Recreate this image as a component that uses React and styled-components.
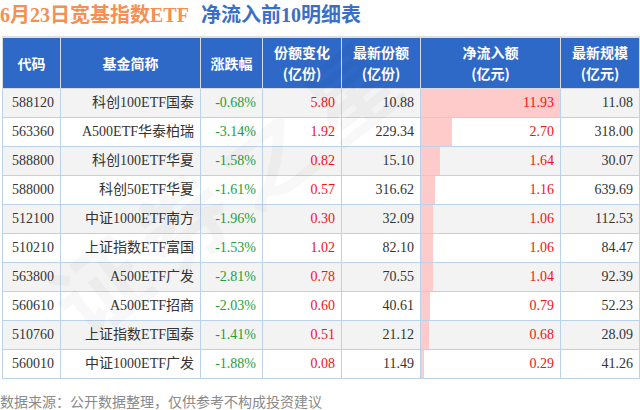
import React from 'react'
import styled, { createGlobalStyle } from 'styled-components'

const GlobalStyle = createGlobalStyle`
  html, body {
    margin: 0;
    padding: 0;
    background: #fff;
  }
`

const Page = styled.div`
  position: relative;
  width: 640px;
  height: 410px;
  overflow: hidden;
  background: #fff;
  font-family: "Liberation Serif", "Noto Sans CJK SC", serif;
`

const Title = styled.h1`
  display: flex;
  gap: 12px;
  margin: 0;
  height: 30px;
  align-items: center;
  font-size: 20px;
  font-weight: 700;
  line-height: 28px;
`

const TitlePart = styled.span`
  color: ${p => p.$color};
`

const Table = styled.table`
  position: relative;
  z-index: 1;
  margin: 6px 0 0 2px;
  width: 637px;
  table-layout: fixed;
  border-collapse: collapse;
  border-top: 2px solid #dedede;
`

const HeadCell = styled.th`
  height: 50px;
  padding: 0;
  background: #2f69c8;
  border: 1px solid #d6dbe2;
  color: #fff;
  font-family: "Noto Sans CJK SC", sans-serif;
  font-size: 14px;
  font-weight: 700;
  line-height: 21px;
  text-align: center;
`

const Row = styled.tr`
  background: ${p => (p.$odd ? '#f3f3f3' : '#fff')};
`

const Cell = styled.td`
  position: relative;
  height: 28px;
  padding: 0 6px 0 0;
  border: 1px solid #bcd2ea;
  color: ${p => p.$color || '#333'};
  font-size: 14px;
  line-height: 28px;
  text-align: right;
  white-space: nowrap;
`

const Bar = styled.div`
  position: absolute;
  left: 0;
  top: 0;
  bottom: 0;
  background: #ffcaca;
`

const CellText = styled.span`
  position: relative;
`

const Footer = styled.div`
  position: relative;
  z-index: 1;
  margin-top: 12px;
  color: #8a8a8a;
  font-family: "Noto Sans CJK SC", sans-serif;
  font-size: 14px;
  line-height: 20px;
`

const Watermark = styled.div`
  position: absolute;
  left: ${p => p.$x}px;
  top: ${p => p.$y}px;
  z-index: 2;
  pointer-events: none;
  transform: rotate(-38deg);
  transform-origin: left bottom;
  color: rgba(0, 0, 0, 0.028);
  font-family: "Noto Sans CJK SC", sans-serif;
  font-size: 92px;
  font-weight: 700;
  line-height: 100px;
  white-space: nowrap;
  letter-spacing: 14px;
`

const cols = [58, 140, 62, 79, 79, 140, 79]

const headers = [
  ['代码'],
  ['基金简称'],
  ['涨跌幅'],
  ['份额变化', '(亿份)'],
  ['最新份额', '(亿份)'],
  ['净流入额', '(亿元)'],
  ['最新规模', '(亿元)'],
]

const rows = [
  ['588120', '科创100ETF国泰', '-0.68%', '5.80', '10.88', 11.93, '11.08'],
  ['563360', 'A500ETF华泰柏瑞', '-3.14%', '1.92', '229.34', 2.70, '318.00'],
  ['588800', '科创100ETF华夏', '-1.58%', '0.82', '15.10', 1.64, '30.07'],
  ['588000', '科创50ETF华夏', '-1.61%', '0.57', '316.62', 1.16, '639.69'],
  ['512100', '中证1000ETF南方', '-1.96%', '0.30', '32.09', 1.06, '112.53'],
  ['510210', '上证指数ETF富国', '-1.53%', '1.02', '82.10', 1.06, '84.47'],
  ['563800', 'A500ETF广发', '-2.81%', '0.78', '70.55', 1.04, '92.39'],
  ['560610', 'A500ETF招商', '-2.03%', '0.60', '40.61', 0.79, '52.23'],
  ['510760', '上证指数ETF国泰', '-1.41%', '0.51', '21.12', 0.68, '28.09'],
  ['560010', '中证1000ETF广发', '-1.88%', '0.08', '11.49', 0.29, '41.26'],
]

const maxFlow = Math.max(...rows.map(r => r[5]))

const App = () => (
  <Page>
    <GlobalStyle />
    <Title>
      <TitlePart $color="#f58f52">6月23日宽基指数ETF</TitlePart>
      <TitlePart $color="#3b6fc6">净流入前10明细表</TitlePart>
    </Title>
    <Table>
      <colgroup>
        {cols.map((w, i) => <col key={i} style={{ width: w }} />)}
      </colgroup>
      <thead>
        <tr>
          {headers.map((h, i) => (
            <HeadCell key={i}>
              {h.map((line, j) => <div key={j}>{line}</div>)}
            </HeadCell>
          ))}
        </tr>
      </thead>
      <tbody>
        {rows.map((r, i) => (
          <Row key={r[0]} $odd={i % 2 === 0}>
            <Cell>{r[0]}</Cell>
            <Cell>{r[1]}</Cell>
            <Cell $color="#1f9e3a">{r[2]}</Cell>
            <Cell $color="#f01414">{r[3]}</Cell>
            <Cell>{r[4]}</Cell>
            <Cell $color="#f01414">
              <Bar style={{ width: `${(r[5] / maxFlow) * 100}%` }} />
              <CellText>{r[5].toFixed(2)}</CellText>
            </Cell>
            <Cell>{r[6]}</Cell>
          </Row>
        ))}
      </tbody>
    </Table>
    <Footer>数据来源：公开数据整理，仅供参考不构成投资建议</Footer>
    <Watermark $x={92} $y={252}>证券之星</Watermark>
  </Page>
)

export default App
